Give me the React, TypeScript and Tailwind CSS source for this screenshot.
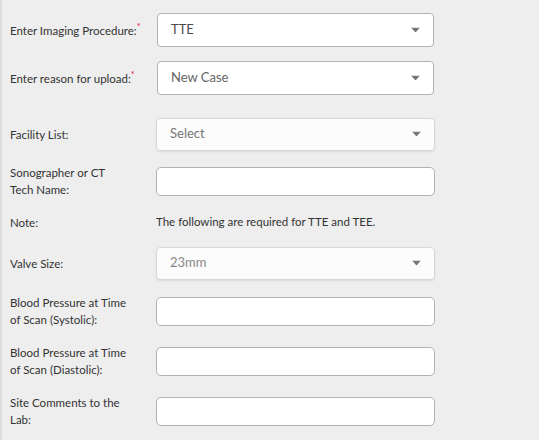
import React from 'react'

const labelCls = 'w-[146px] shrink-0 whitespace-nowrap text-[11.5px] leading-[17px] text-[#333]'

function Caret() {
  return (
    <svg width="9" height="5" viewBox="0 0 9 5" className="absolute right-[13px] top-1/2 -translate-y-1/2">
      <path d="M0 0h9L4.5 5z" fill="#777" />
    </svg>
  )
}

function SelectBox({ value, light, color }: { value: string; light?: boolean; color: string }) {
  return (
    <div
      className={
        'relative flex items-center rounded-[4px] border pl-[13px] text-[13px] ' +
        (light
          ? 'w-[279px] h-[33px] border-[#d4d8de] bg-[#fcfcfc] shadow-[0_1px_2px_rgba(0,0,0,0.08)]'
          : 'ml-px w-[277px] h-[34px] border-[#aeb3ba] bg-white')
      }
      style={{ color }}
    >
      {value}
      <Caret />
    </div>
  )
}

function TextBox() {
  return <div className="w-[279px] h-[29px] bg-white rounded-[5px] border border-[#aeb3ba]" />
}

function Row({ label, required, children, className }: { label: React.ReactNode; required?: boolean; children: React.ReactNode; className?: string }) {
  return (
    <div className={'flex items-center h-[34px] ' + (className ?? '')}>
      <div className={labelCls}>
        {label}
        {required && <sup className="text-[#e8114a] text-[9px]">*</sup>}
      </div>
      {children}
    </div>
  )
}

export default function App() {
  return (
    <div
      className="w-[539px] h-[440px] bg-[#eeeeee] border-l-2 border-[#dedede] overflow-hidden"
      style={{ fontFamily: 'Lato, "Open Sans", sans-serif' }}
    >
      <div className="pl-[8px] pt-[13px]">
        <Row label="Enter Imaging Procedure:" required>
          <SelectBox value="TTE" color="#4a4a4a" />
        </Row>
        <Row label="Enter reason for upload:" required className="mt-[14px]">
          <SelectBox value="New Case" color="#666" />
        </Row>
        <Row label="Facility List:" className="mt-[22px]">
          <SelectBox value="Select" light color="#777" />
        </Row>
        <Row label={<>Sonographer or CT<br />Tech Name:</>} className="mt-[13px]">
          <TextBox />
        </Row>
        <Row label="Note:" className="mt-[7px]">
          <div className="text-[11.5px] text-[#333]">The following are required for TTE and TEE.</div>
        </Row>
        <Row label="Valve Size:" className="mt-[7px]">
          <SelectBox value="23mm" light color="#888" />
        </Row>
        <Row label={<>Blood Pressure at Time<br />of Scan (Systolic):</>} className="mt-[14px]">
          <TextBox />
        </Row>
        <Row label={<>Blood Pressure at Time<br />of Scan (Diastolic):</>} className="mt-[16px]">
          <TextBox />
        </Row>
        <Row label={<>Site Comments to the<br />Lab:</>} className="mt-[16px]">
          <TextBox />
        </Row>
      </div>
    </div>
  )
}
